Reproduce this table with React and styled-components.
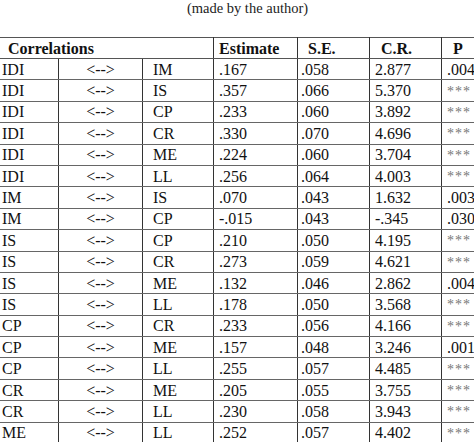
import styled, { createGlobalStyle } from "styled-components";

const GlobalStyle = createGlobalStyle`
  html, body {
    margin: 0;
    padding: 0;
    background: #ffffff;
    overflow: hidden;
  }
  body {
    font-family: "Liberation Serif", "Times New Roman", serif;
    color: #111;
  }
`;

const Page = styled.div`
  width: 474px;
  height: 442px;
  overflow: hidden;
`;

const Caption = styled.div`
  height: 37px;
  padding-left: 21px;
  text-align: center;
  font-size: 14.5px;
  line-height: 17px;
  color: #222;
`;

const Table = styled.table`
  margin-left: -4px;
  border-collapse: collapse;
  table-layout: fixed;
  width: 515px;
  font-size: 16px;
`;

const HeadCell = styled.th`
  height: 20px;
  padding: 0 0 0 ${(p) => p.$pad || 0}px;
  border: 1px solid #333;
  border-top-color: #555;
  border-bottom-color: #555;
  font-weight: bold;
  text-align: left;
  line-height: 19px;
`;

const Cell = styled.td`
  height: 20.4px;
  padding: 0 0 0 ${(p) => p.$pad || 0}px;
  border: 1px solid #333;
  border-top-color: #666;
  border-bottom-color: #666;
  text-align: ${(p) => (p.$center ? "center" : "left")};
  line-height: 19px;
  white-space: nowrap;
  overflow: hidden;
`;

const Stars = styled.span`
  color: #777;
  font-size: 14px;
  letter-spacing: 1px;
`;

const widths = [62, 84, 71, 84, 72, 72, 70];

const rows = [
  ["IDI", "IM", ".167", ".058", "2.877", ".004"],
  ["IDI", "IS", ".357", ".066", "5.370", "***"],
  ["IDI", "CP", ".233", ".060", "3.892", "***"],
  ["IDI", "CR", ".330", ".070", "4.696", "***"],
  ["IDI", "ME", ".224", ".060", "3.704", "***"],
  ["IDI", "LL", ".256", ".064", "4.003", "***"],
  ["IM", "IS", ".070", ".043", "1.632", ".003"],
  ["IM", "CP", "-.015", ".043", "-.345", ".030"],
  ["IS", "CP", ".210", ".050", "4.195", "***"],
  ["IS", "CR", ".273", ".059", "4.621", "***"],
  ["IS", "ME", ".132", ".046", "2.862", ".004"],
  ["IS", "LL", ".178", ".050", "3.568", "***"],
  ["CP", "CR", ".233", ".056", "4.166", "***"],
  ["CP", "ME", ".157", ".048", "3.246", ".001"],
  ["CP", "LL", ".255", ".057", "4.485", "***"],
  ["CR", "ME", ".205", ".055", "3.755", "***"],
  ["CR", "LL", ".230", ".058", "3.943", "***"],
  ["ME", "LL", ".252", ".057", "4.402", "***"],
];

export default function App() {
  return (
    <Page>
      <GlobalStyle />
      <Caption>(made by the author)</Caption>
      <Table>
        <colgroup>
          {widths.map((w, i) => (
            <col key={i} style={{ width: w }} />
          ))}
        </colgroup>
        <thead>
          <tr>
            <HeadCell colSpan={3} $pad={11}>
              Correlations
            </HeadCell>
            <HeadCell $pad={5}>Estimate</HeadCell>
            <HeadCell $pad={10}>S.E.</HeadCell>
            <HeadCell $pad={11}>C.R.</HeadCell>
            <HeadCell $pad={11}>P</HeadCell>
          </tr>
        </thead>
        <tbody>
          {rows.map((r, i) => (
            <tr key={i}>
              <Cell $pad={5}>{r[0]}</Cell>
              <Cell $center>&lt;--&gt;</Cell>
              <Cell $pad={10}>{r[1]}</Cell>
              <Cell $pad={5}>{r[2]}</Cell>
              <Cell $pad={3}>{r[3]}</Cell>
              <Cell $pad={5}>{r[4]}</Cell>
              <Cell $pad={5}>
                {r[5] === "***" ? <Stars>***</Stars> : r[5]}
              </Cell>
            </tr>
          ))}
        </tbody>
      </Table>
    </Page>
  );
}
